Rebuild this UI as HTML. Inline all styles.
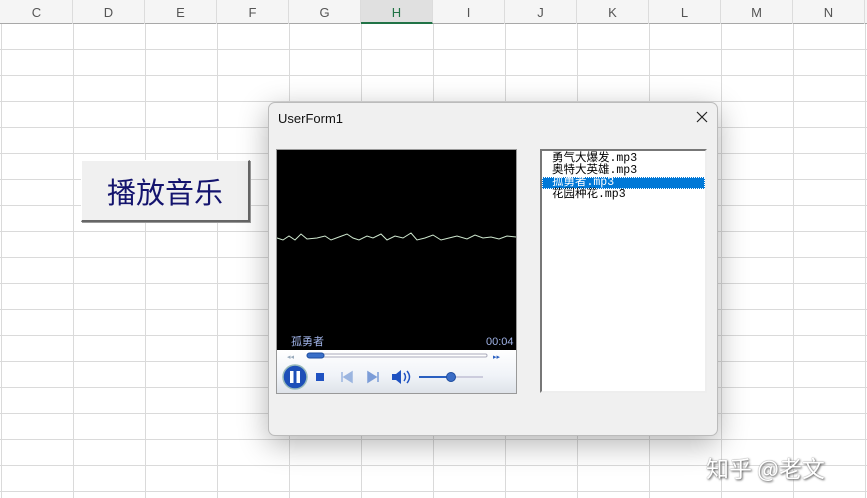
<!DOCTYPE html>
<html><head><meta charset="utf-8"><style>
*{margin:0;padding:0;box-sizing:border-box}
body{width:867px;height:498px;overflow:hidden;position:relative;background:#fff;font-family:"Liberation Sans","Noto Sans CJK SC",sans-serif}
#grid{position:absolute;left:0;top:24px;width:867px;height:474px;
background-image:linear-gradient(#dadada 1px,transparent 1px),linear-gradient(90deg,#dadada 1px,transparent 1px);
background-size:72px 26px;background-position:0 -1px,1px 0}
#hdr{position:absolute;left:0;top:0;width:867px;height:24px;background:#f5f5f5;border-bottom:1px solid #a8a8a8}
.h{position:absolute;top:0;height:24px;width:72px;text-align:center;line-height:26px;font-size:13px;color:#555;border-right:1px solid #dcdcdc}
.sel{background:#e0e0e0;color:#217346;border-bottom:2px solid #217346}
#btn{position:absolute;left:81px;top:160px;width:169px;height:62px;background:#f0f0f0;border:1px solid #fff;border-right:2px solid #666;border-bottom:2px solid #666;box-shadow:1px 1px 0 #999;font-size:29px;color:#14146e;text-align:center;line-height:60px;font-family:"Noto Sans CJK SC",sans-serif}
#dlg{position:absolute;left:268px;top:102px;width:450px;height:334px;background:#f0f0f0;border:1px solid #bbb;border-radius:7px;box-shadow:0 8px 30px rgba(0,0,0,.3)}
#title{position:absolute;left:9px;top:8px;font-size:13px;color:#111}
#pl{position:absolute;left:7px;top:46px;width:241px;height:245px;border:1px solid #999;background:#000}
#ctl{position:absolute;left:0;top:200px;width:239px;height:43px;background:linear-gradient(#fff,#f0f3f8 60%,#dfe3e9)}
#list{position:absolute;left:271px;top:46px;width:167px;height:244px;background:#fff;border:2px solid;border-color:#777 #eee #eee #777;font-family:"Liberation Mono","Noto Sans CJK SC",monospace;font-size:11.5px;line-height:12px;padding-top:2px}
#list div{padding-left:10px;height:12px}
#wm{position:absolute;left:706px;top:450px;font-size:23px;color:#fff;text-shadow:1px 1px 2px #555,0 0 1px #777;font-family:"Noto Sans CJK SC",sans-serif}
</style></head><body>
<div id="grid"></div>
<div id="hdr">
<div class="h" style="left:1px">C</div><div class="h" style="left:73px">D</div><div class="h" style="left:145px">E</div><div class="h" style="left:217px">F</div><div class="h" style="left:289px">G</div><div class="h sel" style="left:361px">H</div><div class="h" style="left:433px">I</div><div class="h" style="left:505px">J</div><div class="h" style="left:577px">K</div><div class="h" style="left:649px">L</div><div class="h" style="left:721px">M</div><div class="h" style="left:793px">N</div>
</div>
<div id="btn">播放音乐</div>
<div id="dlg">
<div id="title">UserForm1</div>
<svg style="position:absolute;left:427px;top:8px" width="12" height="12"><path d="M1 1L11 11M11 1L1 11" stroke="#222" stroke-width="1.2"/></svg>
<div id="pl">
<svg width="239" height="200" style="position:absolute;left:0;top:0"><polyline fill="none" stroke="#cfe8cf" stroke-width="1" points="0,88 6,90 12,86 18,90 24,84 30,89 40,88 48,86 54,90 62,87 70,84 76,88 82,90 90,86 96,88 104,84 110,90 118,86 126,88 134,83 140,90 148,88 156,85 164,90 172,88 180,86 190,89 198,85 206,88 214,87 222,89 230,86 239,87"/>
<text x="14" y="195" fill="#9fb2e6" font-size="11" font-family="Noto Sans CJK SC,sans-serif">孤勇者</text>
<text x="209" y="195" fill="#9fb2e6" font-size="11" font-family="Liberation Sans,sans-serif">00:04</text></svg>
<div id="ctl">
<svg width="239" height="43">
<text x="10" y="9" fill="#9ab" font-size="7">◂◂</text>
<rect x="30" y="4" width="180" height="3" rx="1.5" fill="#fff" stroke="#aab"/>
<rect x="30" y="3" width="17" height="5" rx="2.5" fill="#3a6fc8" stroke="#1e4d9f"/>
<text x="216" y="9" fill="#2a5fc0" font-size="7">▸▸</text>
<circle cx="18" cy="27" r="12" fill="#1d4fb8" stroke="#9bb" stroke-width="1.5"/>
<rect x="13" y="21" width="3.5" height="12" fill="#fff"/><rect x="19.5" y="21" width="3.5" height="12" fill="#fff"/>
<rect x="39" y="23" width="8" height="8" fill="#1f52c2"/>
<path d="M65 22v10M75 22l-8 5 8 5z" stroke="#9bb5e0" fill="#9bb5e0" stroke-width="1.5"/>
<path d="M101 22v10M91 22l8 5-8 5z" stroke="#7c9dd8" fill="#7c9dd8" stroke-width="1.5"/>
<path d="M115 24h4l5-4v14l-5-4h-4z" fill="#1f52c2"/><path d="M127 23q3 4 0 8M130 21q5 6 0 12" stroke="#1f52c2" fill="none" stroke-width="1.5"/>
<line x1="142" y1="27" x2="206" y2="27" stroke="#ccd" stroke-width="2"/>
<line x1="142" y1="27" x2="174" y2="27" stroke="#2a5fc0" stroke-width="2"/>
<circle cx="174" cy="27" r="4.5" fill="#3b6dc6" stroke="#1e4d9f"/>
</svg></div>
</div>
<div id="list">
<div>勇气大爆发.mp3</div><div>奥特大英雄.mp3</div><div style="background:#0078d7;color:#fff;outline:1px dotted #fff;outline-offset:-1px">孤勇者.mp3</div><div>花园种花.mp3</div>
</div>
</div>
<div id="wm">知乎 @老文</div>
</body></html>
